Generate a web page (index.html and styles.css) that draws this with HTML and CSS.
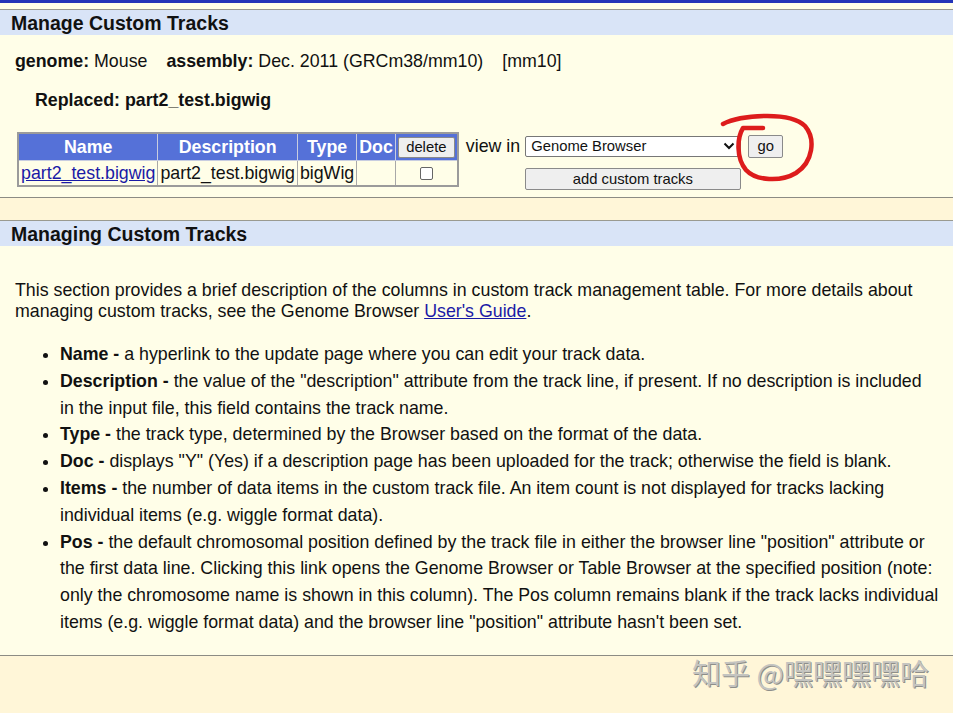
FILE: index.html
```html
<!DOCTYPE html>
<html lang="en">
<head>
<meta charset="utf-8">
<title>Manage Custom Tracks</title>
<link rel="stylesheet" href="styles.css">
</head>
<body>
<div class="topbar"></div>
<section class="panel first">
  <h2 class="sec-head">Manage Custom Tracks</h2>
  <div class="panel-body">
    <p class="genome"><b>genome:</b> Mouse <span class="sp"></span><b>assembly:</b> Dec. 2011 (GRCm38/mm10) <span class="sp"></span>[mm10]</p>
    <p class="replaced">Replaced: part2_test.bigwig</p>
    <div class="manage-row">
      <table class="tracks">
        <thead>
          <tr>
            <th>Name</th>
            <th>Description</th>
            <th>Type</th>
            <th>Doc</th>
            <th class="del-cell"><button class="btn del">delete</button></th>
          </tr>
        </thead>
        <tbody>
          <tr>
            <td><a href="#">part2_test.bigwig</a></td>
            <td>part2_test.bigwig</td>
            <td>bigWig</td>
            <td></td>
            <td class="chk-cell"><span class="chk"></span></td>
          </tr>
        </tbody>
      </table>
      <div class="controls">
        <div class="view-row">
          <span class="view-label">view in</span>
          <div class="select"><span>Genome Browser</span><svg class="caret" width="12" height="8" viewBox="0 0 12 8"><path d="M1.5 1.5 L6 6 L10.5 1.5" fill="none" stroke="#111" stroke-width="2"/></svg></div>
          <button class="btn go">go</button>
        </div>
        <button class="btn add">add custom tracks</button>
      </div>
    </div>
  </div>
  <svg class="scribble" width="110" height="80" viewBox="0 0 110 80"><path d="M8,17 C25,8 75,4 90,19 C101,32 98,55 81,66 C66,75 41,74 31,63 C21,51 22,31 28,21 L48,21" fill="none" stroke="#dd1c1c" stroke-width="4.5" stroke-linecap="round" stroke-linejoin="round"/></svg>
</section>
<div class="band"></div>
<section class="panel">
  <h2 class="sec-head">Managing Custom Tracks</h2>
  <div class="panel-body help">
    <p class="intro">This section provides a brief description of the columns in custom track management table. For more details about managing custom tracks, see the Genome Browser <a href="#">User's Guide</a>.</p>
    <ul class="defs">
      <li><b>Name -</b> a hyperlink to the update page where you can edit your track data.</li>
      <li><b>Description -</b> the value of the "description" attribute from the track line, if present. If no description is included in the input file, this field contains the track name.</li>
      <li><b>Type -</b> the track type, determined by the Browser based on the format of the data.</li>
      <li><b>Doc -</b> displays "Y" (Yes) if a description page has been uploaded for the track; otherwise the field is blank.</li>
      <li><b>Items -</b> the number of data items in the custom track file. An item count is not displayed for tracks lacking individual items (e.g. wiggle format data).</li>
      <li><b>Pos -</b> the default chromosomal position defined by the track file in either the browser line "position" attribute or the first data line. Clicking this link opens the Genome Browser or Table Browser at the specified position (note: only the chromosome name is shown in this column). The Pos column remains blank if the track lacks individual items (e.g. wiggle format data) and the browser line "position" attribute hasn't been set.</li>
    </ul>
  </div>
</section>
<footer class="foot">
  <span class="mark">知乎 @嘿嘿嘿嘿哈</span>
</footer>
</body>
</html>
```
FILE: styles.css
```css
html, body {
  margin: 0;
  padding: 0;
}
body {
  background: #fffee8;
  font-family: "Liberation Sans", Arial, sans-serif;
  font-size: 17.8px;
  color: #111;
  width: 953px;
  height: 713px;
  overflow: hidden;
  display: flex;
  flex-direction: column;
}
.topbar {
  height: 3px;
  background: #2434b8;
  margin-bottom: 6px;
}
.panel {
  position: relative;
  border-top: 1px solid #9a9a90;
}
.sec-head {
  margin: 0;
  background: #d9e4f7;
  font-size: 19.5px;
  font-weight: bold;
  height: 25px;
  line-height: 26px;
  padding-left: 11px;
  color: #111;
}
.panel-body {
  padding: 0 15px;
}
.genome {
  margin: 15px 0 0;
  line-height: 22px;
}
.sp {
  display: inline-block;
  width: 14px;
}
.replaced {
  margin: 17px 0 0 20px;
  font-weight: bold;
  line-height: 22px;
}
.manage-row {
  display: flex;
  align-items: flex-start;
  margin-top: 21px;
  padding-left: 2px;
  padding-bottom: 7px;
}
.tracks {
  border-collapse: collapse;
  border: 2px solid #9b9b9b;
  font-size: 17.8px;
}
.tracks th, .tracks td {
  border: 1px solid #a8a8a8;
  padding: 1px 2px;
  height: 22px;
  line-height: 21px;
  white-space: nowrap;
}
.tracks th {
  background: #5571d8;
  color: #fff;
  font-weight: bold;
  text-align: center;
  border-color: #c8cde0;
}
.tracks th.del-cell {
  background: #5571d8;
  padding: 2px;
}
.tracks td {
  background: #fffee8;
}
.tracks td a {
  color: #1a1aa6;
}
.chk-cell {
  text-align: center;
}
.chk {
  display: inline-block;
  width: 11px;
  height: 11px;
  border: 1px solid #666;
  border-radius: 2px;
  background: #fff;
  vertical-align: middle;
}
.btn {
  font-family: "Liberation Sans", Arial, sans-serif;
  font-size: 14.8px;
  color: #111;
  background: #efefef;
  border: 1px solid #8a8a8a;
  border-radius: 2px;
  padding: 0;
  cursor: default;
}
.del {
  width: 57px;
  height: 21px;
  display: block;
}
.controls {
  margin-left: 7px;
  display: flex;
  flex-direction: column;
  align-items: flex-start;
}
.view-row {
  display: flex;
  align-items: center;
  height: 24px;
  margin-top: 2px;
}
.view-label {
  margin-right: 5px;
}
.select {
  border: 1px solid #777;
  border-radius: 2px;
  background: #fff;
  font-size: 14.8px;
  display: flex;
  align-items: center;
  justify-content: space-between;
  padding: 0 5px 0 5px;
  box-sizing: border-box;
  width: 216px;
  height: 21px;
}
.caret {
  display: block;
}
.go {
  margin-left: 7px;
  width: 35px;
  height: 23px;
}
.add {
  margin-left: 59px;
  margin-top: 10px;
  width: 216px;
  height: 22px;
}
.scribble {
  position: absolute;
  left: 715px;
  top: 97px;
}
.band {
  height: 22px;
  background: #fff6d8;
  border-top: 1px solid #8c8c84;
}
.help {
  padding-top: 34px;
  padding-right: 14px;
}
.intro {
  margin: 0;
  line-height: 21px;
}
.help a {
  color: #1a1aa6;
}
.defs {
  margin: 19px 0 0;
  padding-left: 45px;
  line-height: 26.8px;
}
.defs li {
  padding-left: 0;
}
.foot {
  flex: 1;
  margin-top: 19px;
  background: #fff6d8;
  border-top: 1px solid #8c8c84;
  text-align: right;
  padding: 2px 24px 0 0;
  line-height: 1;
}
.mark {
  font-family: "Noto Sans CJK SC", sans-serif;
  font-size: 29px;
  line-height: 1;
  color: #c4c4c0;
  text-shadow: 1px 1px 0 #8e8e8a;
}
```
